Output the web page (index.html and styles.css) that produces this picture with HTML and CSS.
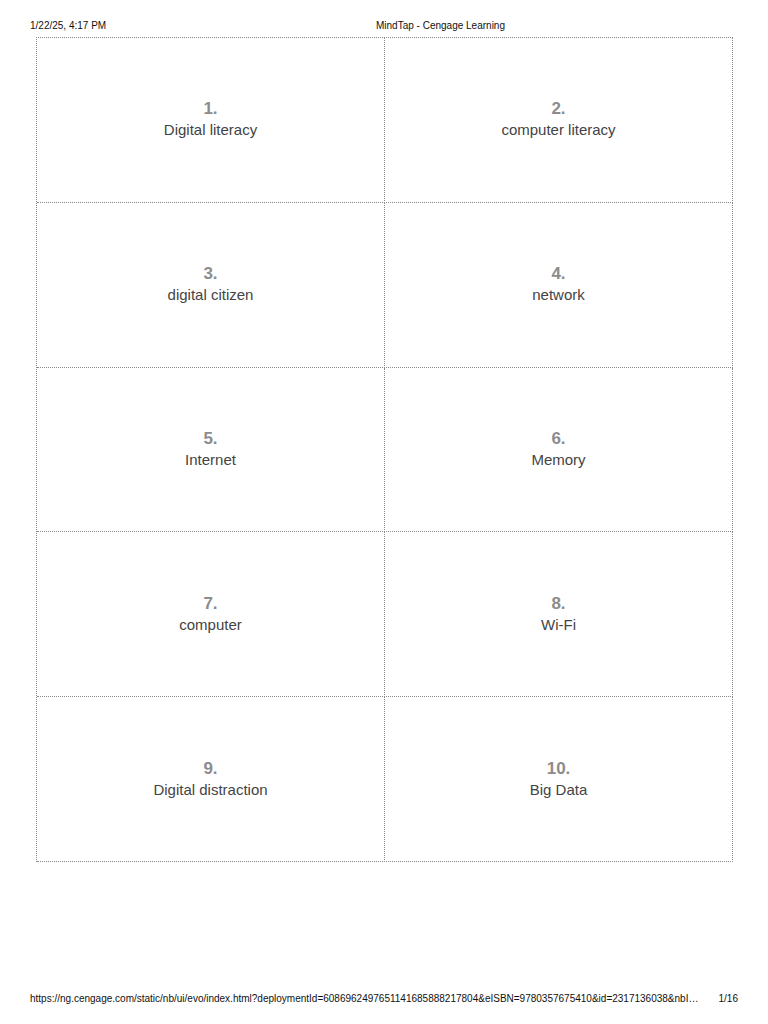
FILE: index.html
```html
<!DOCTYPE html>
<html>
<head>
<meta charset="utf-8">
<title>MindTap - Cengage Learning</title>
<link rel="stylesheet" href="styles.css">
</head>
<body>
<div class="page">
  <header class="print-head">
    <span class="date">1/22/25, 4:17 PM</span>
    <span class="title">MindTap - Cengage Learning</span>
  </header>
  <main class="cards">
    <div class="card"><div class="num">1.</div><div class="term">Digital literacy</div></div>
    <div class="card"><div class="num">2.</div><div class="term">computer literacy</div></div>
    <div class="card"><div class="num">3.</div><div class="term">digital citizen</div></div>
    <div class="card"><div class="num">4.</div><div class="term">network</div></div>
    <div class="card"><div class="num">5.</div><div class="term">Internet</div></div>
    <div class="card"><div class="num">6.</div><div class="term">Memory</div></div>
    <div class="card"><div class="num">7.</div><div class="term">computer</div></div>
    <div class="card"><div class="num">8.</div><div class="term">Wi-Fi</div></div>
    <div class="card"><div class="num">9.</div><div class="term">Digital distraction</div></div>
    <div class="card"><div class="num">10.</div><div class="term">Big Data</div></div>
  </main>
  <footer class="print-foot">
    <span class="url">https://ng.cengage.com/static/nb/ui/evo/index.html?deploymentId=6086962497651141685888217804&amp;eISBN=9780357675410&amp;id=2317136038&amp;nbI…</span>
    <span class="page-no">1/16</span>
  </footer>
</div>
</body>
</html>
```

FILE: styles.css
```css
html, body {
  margin: 0;
  padding: 0;
  background: #fff;
}
body {
  font-family: "Liberation Sans", Arial, sans-serif;
  color: #222;
}
.page {
  width: 768px;
  height: 1024px;
  display: flex;
  flex-direction: column;
}
.print-head {
  display: flex;
  height: 37px;
  padding: 0 30px;
  align-items: flex-start;
  font-size: 10px;
  color: #111;
}
.print-head .date {
  padding-top: 20px;
  width: 346px;
}
.print-head .title {
  padding-top: 20px;
}
.cards {
  margin-left: 36px;
  width: 697px;
  display: grid;
  grid-template-columns: 348px 348px;
  grid-auto-rows: 164.8px;
  border-top: 1px dotted #8a8a8a;
  border-left: 1px dotted #8a8a8a;
  box-sizing: border-box;
}
.card {
  border-right: 1px dotted #8a8a8a;
  border-bottom: 1px dotted #8a8a8a;
  display: flex;
  flex-direction: column;
  align-items: center;
  justify-content: center;
}
.card:nth-child(2n) {
  border-left: 1px dotted #8a8a8a;
  margin-left: -1px;
}
.num {
  font-size: 17px;
  font-weight: bold;
  color: #8c8c8c;
  line-height: 20px;
}
.term {
  font-size: 15px;
  color: #444;
  line-height: 20px;
  margin-top: 1px;
}
.print-foot {
  margin-top: auto;
  display: flex;
  justify-content: space-between;
  padding: 0 30px 20px 30px;
  font-size: 10px;
  color: #111;
}
.print-foot .url {
  white-space: nowrap;
}
```
